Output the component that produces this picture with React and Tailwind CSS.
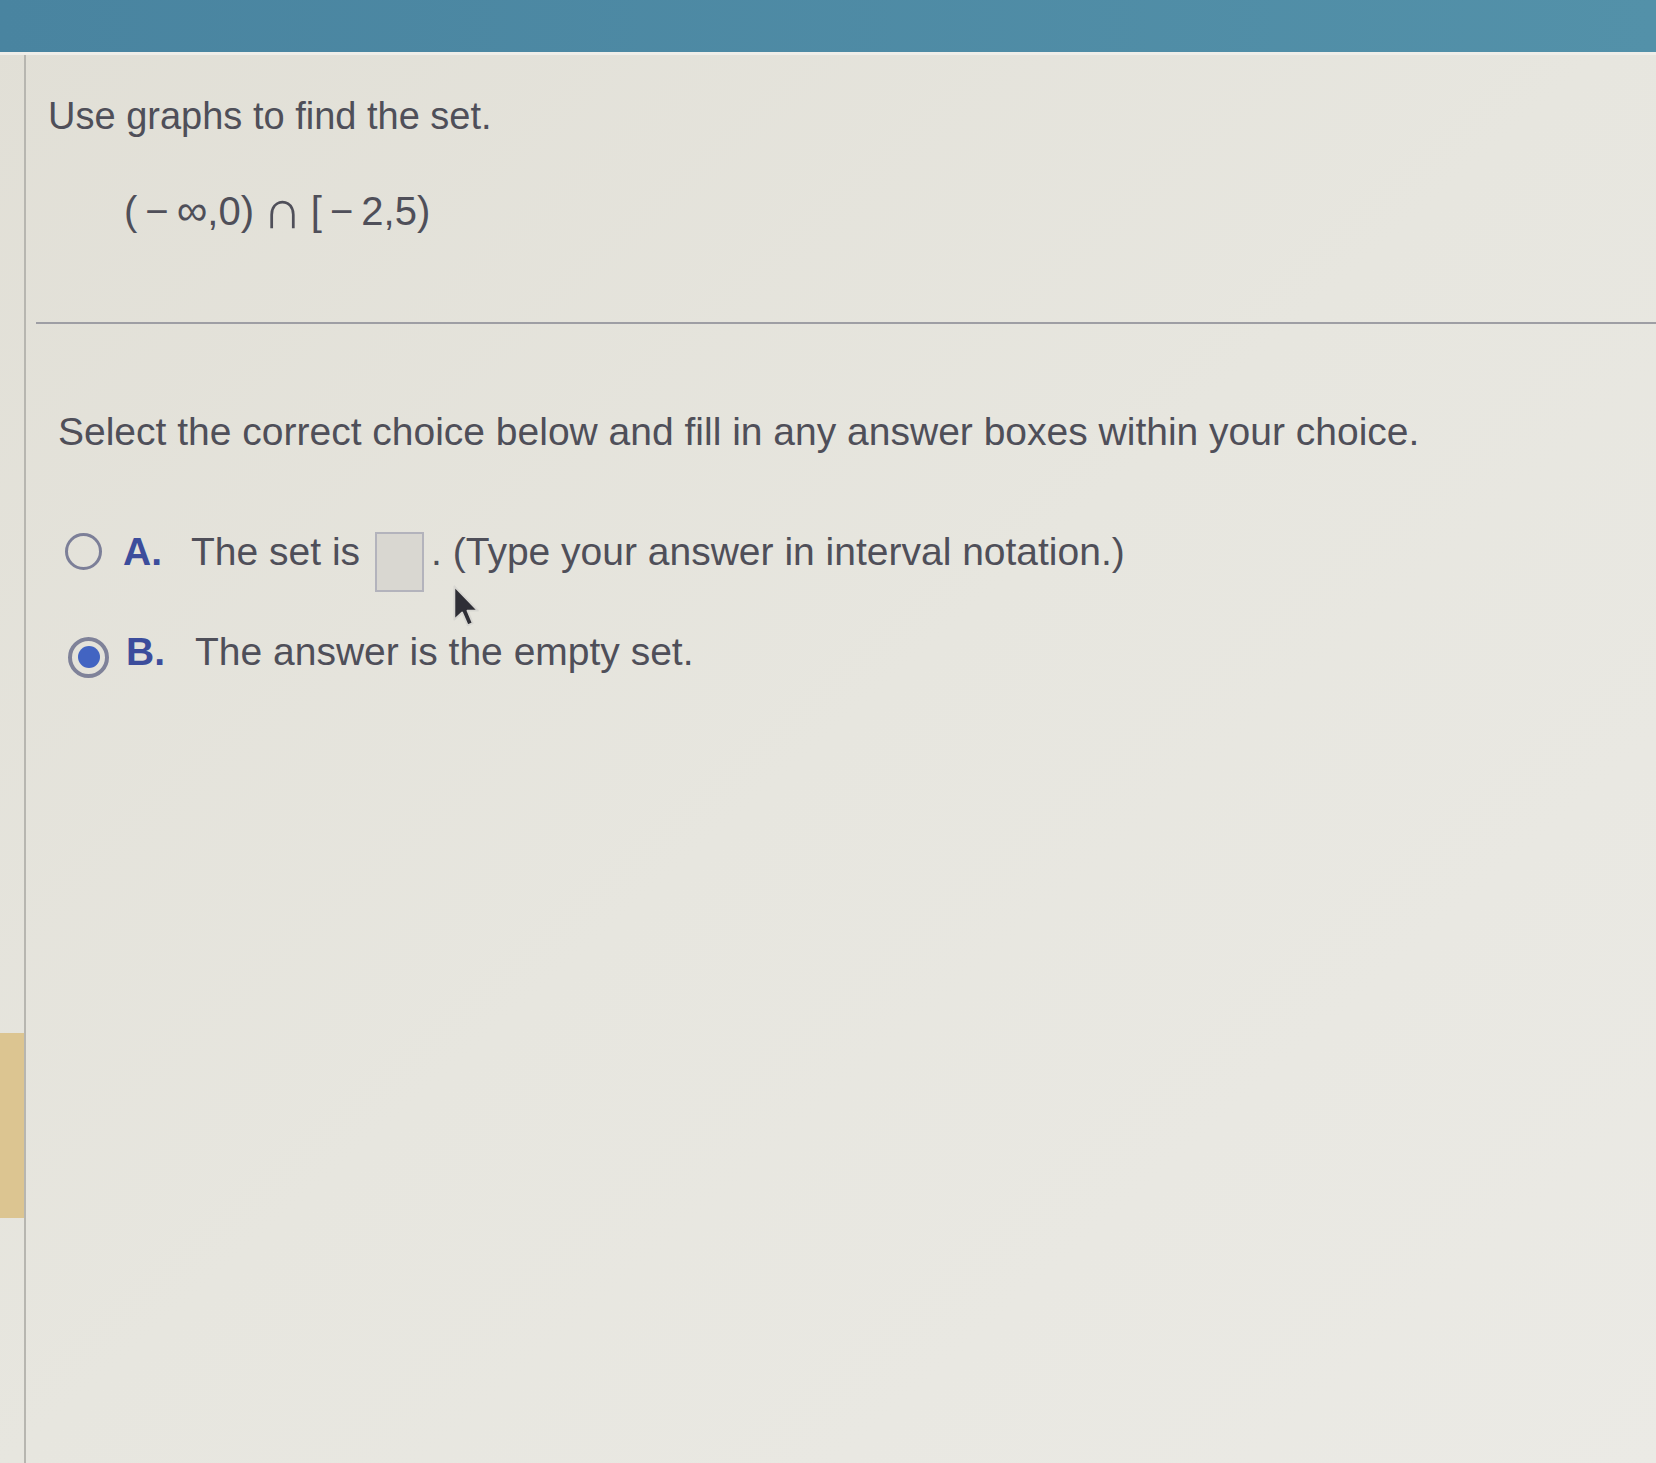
export default function App() {
  return (
    <div className="relative min-h-[1463px] w-full flex flex-col bg-linear-to-br from-[#e1dfd6] via-[#e7e6df] to-[#ebeae5] text-[#4f4f59] font-['Liberation_Sans',Arial,sans-serif]">
      {/* top bar */}
      <div className="h-[52px] bg-linear-to-r from-[#4984a0] to-[#5391a9]" />
      <div className="h-[3px] bg-[#efeee9]" />

      <div className="flex flex-1">
        {/* left gutter */}
        <div className="w-[26px] border-r-2 border-[#b7b6b0] flex flex-col">
          <div className="mt-[978px] h-[185px] bg-[#dcc591]" />
        </div>

        <main className="flex-1 pt-[39px]">
          <h1 className="pl-[22px] text-[38px] leading-[44px]">Use graphs to find the set.</h1>

          <div className="mt-[48px] pl-[98px] text-[40px] leading-[46px] whitespace-nowrap">
            (<span className="mx-[8px]">−</span><span className="text-[43px]">∞</span>,0)
            <span className="ml-[9px] mr-[9px] text-[54px] leading-[46px] align-[-3px]">∩</span>[<span className="mx-[8px]">−</span>2,5)
          </div>

          <div className="mt-[88px] ml-[10px] h-[2px] bg-[#9e9ea4]" />

          <p className="mt-[85px] pl-[32px] text-[39px] leading-[45px] whitespace-nowrap">
            Select the correct choice below and fill in any answer boxes within your choice.
          </p>

          {/* option A */}
          <div className="mt-[75px] h-[45px] text-[39px] leading-[45px] whitespace-nowrap">
            <span className="ml-[39px] inline-block align-[-5px] w-[37px] h-[37px] rounded-full border-[3px] border-[#7c7f98]" />
            <span className="ml-[21px] font-bold text-[#3c4d9c]">A.</span>
            <span className="ml-[29px]">The set is</span>
            <span className="ml-[15px] inline-block align-[-27px] w-[49px] h-[60px] bg-[#d9d7d1] border-2 border-[#b3b3bc]" />
            <span className="ml-[7px]">. (Type your answer in interval notation.)</span>
          </div>

          {/* option B */}
          <div className="mt-[55px] h-[45px] text-[39px] leading-[45px] whitespace-nowrap">
            <span className="ml-[42px] inline-flex items-center justify-center align-[-3px] w-[41px] h-[41px] rounded-full border-[4px] border-[#7f8299]">
              <span className="w-[22px] h-[22px] rounded-full bg-[#4264c2]" />
            </span>
            <span className="ml-[17px] font-bold text-[#3c4d9c]">B.</span>
            <span className="ml-[30px]">The answer is the empty set.</span>
          </div>
        </main>
      </div>

      {/* mouse pointer */}
      <svg className="absolute left-[452px] top-[584px]" width="30" height="46" viewBox="0 0 13 20">
        <path
          d="M1 1 L1 15.5 L4.4 12.4 L6.8 18 L9 17 L6.7 11.6 L11.2 11.6 Z"
          fill="#2f2f36"
          stroke="#d8d7d2"
          strokeWidth="0.8"
          strokeLinejoin="round"
        />
      </svg>
    </div>
  );
}
